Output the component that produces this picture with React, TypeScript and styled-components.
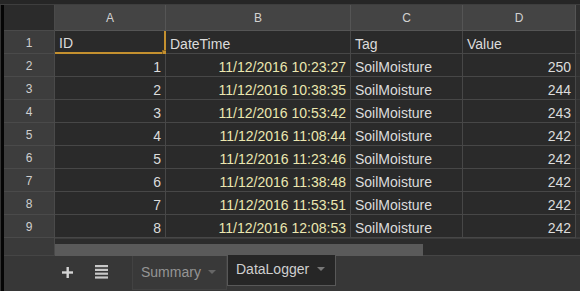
import React from 'react';
import styled, { createGlobalStyle } from 'styled-components';

const GlobalStyle = createGlobalStyle`
  html, body {
    margin: 0;
    padding: 0;
    background: #2e2e2e;
  }
  * { box-sizing: border-box; }
`;

interface Row {
  id: number;
  time: string;
  value: number;
}

const rows: Row[] = [
  { id: 1, time: '11/12/2016 10:23:27', value: 250 },
  { id: 2, time: '11/12/2016 10:38:35', value: 244 },
  { id: 3, time: '11/12/2016 10:53:42', value: 243 },
  { id: 4, time: '11/12/2016 11:08:44', value: 242 },
  { id: 5, time: '11/12/2016 11:23:46', value: 242 },
  { id: 6, time: '11/12/2016 11:38:48', value: 242 },
  { id: 7, time: '11/12/2016 11:53:51', value: 242 },
  { id: 8, time: '11/12/2016 12:08:53', value: 242 },
];

const columns = ['A', 'B', 'C', 'D'];

function App() {
  return (
    <>
      <GlobalStyle />
      <Window>
        <TopStrip />
        <Body>
          <Sheet>
            <Corner />
            {columns.map((c) => (
              <ColHeader key={c}>{c}</ColHeader>
            ))}
            <Filler />

            <RowHeader>1</RowHeader>
            <Cell $selected>
              ID
              <Handle />
            </Cell>
            <Cell>DateTime</Cell>
            <Cell>Tag</Cell>
            <Cell>Value</Cell>
            <Filler />

            {rows.map((r, i) => (
              <React.Fragment key={r.id}>
                <RowHeader>{i + 2}</RowHeader>
                <Cell $align="right">{r.id}</Cell>
                <Cell $align="right" $date>{r.time}</Cell>
                <Cell>SoilMoisture</Cell>
                <Cell $align="right">{r.value}</Cell>
                <Filler />
              </React.Fragment>
            ))}
          </Sheet>
          <ScrollArea>
            <ScrollGutter />
            <ScrollTrack>
              <ScrollThumb />
            </ScrollTrack>
          </ScrollArea>
          <TabBar>
            <IconButton>
              <svg width="13" height="13" viewBox="0 0 13 13">
                <rect x="5.5" y="1" width="2.4" height="11" fill="#d4d4d4" />
                <rect x="1" y="5.3" width="11" height="2.4" fill="#d4d4d4" />
              </svg>
            </IconButton>
            <IconButton>
              <svg width="13" height="14" viewBox="0 0 13 14">
                <rect x="0" y="0" width="13" height="2.2" fill="#c8c8c8" />
                <rect x="0" y="3.8" width="13" height="2.2" fill="#c8c8c8" />
                <rect x="0" y="7.6" width="13" height="2.2" fill="#c8c8c8" />
                <rect x="0" y="11.4" width="13" height="2.2" fill="#c8c8c8" />
              </svg>
            </IconButton>
            <Tab>
              Summary
              <Caret />
            </Tab>
            <Tab $active>
              DataLogger
              <Caret $active />
            </Tab>
          </TabBar>
        </Body>
      </Window>
    </>
  );
}

const Window = styled.div`
  width: 580px;
  height: 291px;
  background: #333;
  display: flex;
  flex-direction: column;
  overflow: hidden;
  font-family: "Liberation Sans", Arial, sans-serif;
  padding-left: 1px;
`;

const TopStrip = styled.div`
  height: 5px;
  margin-left: -1px;
  background: #262626;
  border-bottom: 1px solid #3e3e3e;
  flex-shrink: 0;
`;

const Body = styled.div`
  flex: 1;
  display: flex;
  flex-direction: column;
  border-left: 3px solid #050505;
  min-height: 0;
`;

const Sheet = styled.div`
  display: grid;
  grid-template-columns: 51px 111px 185px 112px 113px 1fr;
  grid-template-rows: 26px repeat(9, 23px);
`;

const Corner = styled.div`
  background: #2b2b2b;
  border-right: 1px solid #4a4a4a;
  border-bottom: 1px solid #4a4a4a;
`;

const ColHeader = styled.div`
  background: #444;
  color: #d2d2d2;
  font-size: 12px;
  display: flex;
  align-items: center;
  justify-content: center;
  padding-top: 1px;
  border-right: 1px solid #555;
  border-bottom: 1px solid #555;
`;

const Filler = styled.div`
  background: #303030;
  border-bottom: 1px solid #3a3a3a;
`;

const RowHeader = styled.div`
  background: #3d3d3d;
  color: #cfcfcf;
  font-size: 12px;
  display: flex;
  align-items: center;
  justify-content: center;
  padding-top: 1px;
  border-right: 1px solid #4a4a4a;
  border-bottom: 1px solid #4a4a4a;
`;

const Cell = styled.div<{ $align?: 'left' | 'right'; $date?: boolean; $selected?: boolean }>`
  position: relative;
  background: #2a2a2a;
  color: ${(p) => (p.$date ? '#ebe7b0' : '#dcdcdc')};
  font-size: 14px;
  display: flex;
  align-items: center;
  justify-content: ${(p) => (p.$align === 'right' ? 'flex-end' : 'flex-start')};
  padding: 3px 4px 0;
  white-space: nowrap;
  border-right: ${(p) => (p.$selected ? '2px solid #c4902f' : '1px solid #474747')};
  border-bottom: ${(p) => (p.$selected ? '2px solid #c4902f' : '1px solid #474747')};
`;

const Handle = styled.span`
  position: absolute;
  right: -4px;
  bottom: -4px;
  width: 6px;
  height: 6px;
  background: #c4902f;
  border: 1px solid #8a6420;
`;

const ScrollArea = styled.div`
  height: 18px;
  display: flex;
  flex-shrink: 0;
  border-bottom: 1px solid #454545;
`;

const ScrollGutter = styled.div`
  width: 51px;
  background: #3a3a3a;
  border-right: 1px solid #4a4a4a;
`;

const ScrollTrack = styled.div`
  flex: 1;
  background: #2c2c2c;
  padding-top: 5px;
  border-top: 1px solid #3c3c3c;
`;

const ScrollThumb = styled.div`
  width: 368px;
  height: 12px;
  background: #5a5a5a;
`;

const TabBar = styled.div`
  flex: 1;
  background: #373737;
  display: flex;
  align-items: flex-start;
  padding-left: 50px;
`;

const IconButton = styled.div`
  width: 26px;
  height: 32px;
  display: flex;
  align-items: center;
  justify-content: center;
  margin-right: 8px;
  &:nth-of-type(2) {
    margin-right: 18px;
  }
`;

const Tab = styled.div<{ $active?: boolean }>`
  height: ${(p) => (p.$active ? '31px' : '34px')};
  padding: 0 10px 2px 8px;
  width: ${(p) => (p.$active ? '109px' : '95px')};
  display: flex;
  align-items: center;
  justify-content: space-between;
  font-size: 14px;
  color: ${(p) => (p.$active ? '#cfcfcf' : '#959595')};
  background: ${(p) => (p.$active ? '#262626' : '#393939')};
  border: 1px solid ${(p) => (p.$active ? '#585858' : '#424242')};
  border-top: none;
  margin-top: ${(p) => (p.$active ? '-1px' : '0')};
`;

const Caret = styled.span<{ $active?: boolean }>`
  width: 0;
  height: 0;
  border-left: 4px solid transparent;
  border-right: 4px solid transparent;
  border-top: 4px solid ${(p) => (p.$active ? '#777' : '#666')};
`;

export default App;
